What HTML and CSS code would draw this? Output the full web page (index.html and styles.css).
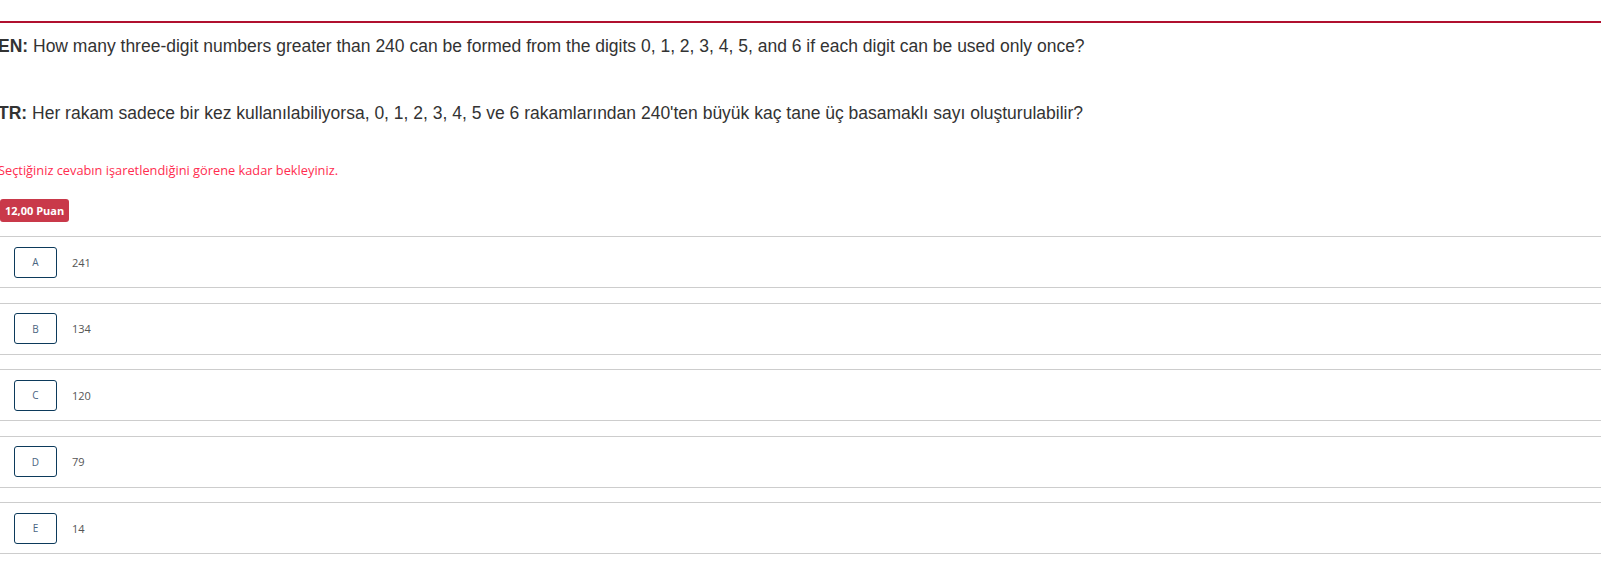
FILE: index.html
```html
<!DOCTYPE html>
<html lang="tr">
<head>
  <meta charset="UTF-8">
  <meta name="viewport" content="width=device-width, initial-scale=1.0">
  <title>Soru</title>
  <link rel="stylesheet" href="styles.css">
</head>
<body>
  <div class="question">
    <div class="question-text">
      <p class="q-line"><strong>EN:</strong> How many three-digit numbers greater than 240 can be formed from the digits 0, 1, 2, 3, 4, 5, and 6 if each digit can be used only once?</p>
      <p class="q-line"><strong>TR:</strong> Her rakam sadece bir kez kullanılabiliyorsa, 0, 1, 2, 3, 4, 5 ve 6 rakamlarından 240'ten büyük kaç tane üç basamaklı sayı oluşturulabilir?</p>
    </div>
    <p class="warning">Seçtiğiniz cevabın işaretlendiğini görene kadar bekleyiniz.</p>
    <span class="points">12,00 Puan</span>
  </div>

  <ul class="options">
    <li class="option"><span class="option-key">A</span><span class="option-value">241</span></li>
    <li class="option"><span class="option-key">B</span><span class="option-value">134</span></li>
    <li class="option"><span class="option-key">C</span><span class="option-value">120</span></li>
    <li class="option"><span class="option-key">D</span><span class="option-value">79</span></li>
    <li class="option"><span class="option-key">E</span><span class="option-value">14</span></li>
  </ul>
</body>
</html>
```

FILE: styles.css
```css
body {
  margin: 0;
  font-family: 'Open Sans', 'Noto Sans', sans-serif;
  background-color: #fff;
  color: #333;
  overflow: hidden;
}
.question {
  border-top: 2px solid #b0102f;
  margin-top: 21px;
  margin-left: -2px;
}
.question-text {
  font-family: 'Liberation Sans', Arial, sans-serif;
  font-size: 17.5px;
  color: #333;
}
.q-line {
  margin: 0;
  line-height: 24px;
}
.q-line:first-child {
  padding-top: 11px;
}
.q-line + .q-line {
  margin-top: 43px;
}
.warning {
  margin: 37px 0 0;
  font-size: 12.8px;
  line-height: 16px;
  color: #ff2d50;
}
.points {
  display: block;
  width: max-content;
  margin-top: 21px;
  margin-left: 2px;
  padding: 0 5px;
  height: 23px;
  line-height: 23px;
  background-color: #c9394a;
  color: #fff;
  font-size: 11px;
  font-weight: 700;
  border-radius: 3px;
}
.options {
  list-style: none;
  margin: 14px 0 0;
  padding: 0;
}
.option {
  display: flex;
  align-items: center;
  height: 50px;
  padding: 0 14px;
  border-top: 1px solid #cdcdcd;
  border-bottom: 1px solid #cdcdcd;
  margin-bottom: 14.5px;
}
.option-key {
  display: flex;
  align-items: center;
  justify-content: center;
  width: 41px;
  height: 29px;
  border: 1px solid #0c3a5b;
  border-radius: 3px;
  font-size: 10px;
  color: #4a6581;
}
.option-value {
  margin-left: 15px;
  font-size: 11px;
  color: #555;
}
```
